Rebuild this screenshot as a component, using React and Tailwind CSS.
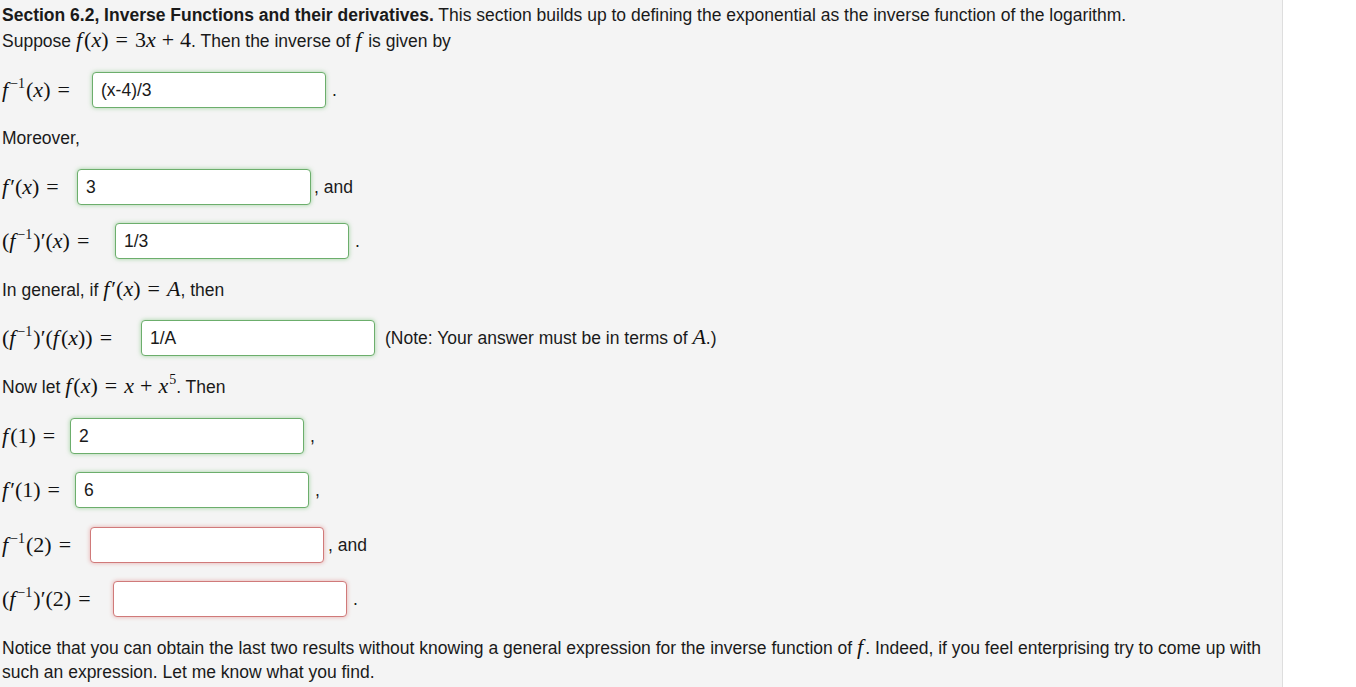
import React from 'react';

// math helpers, MathJax-ish serif look
const M = ({ children }) => (
  <span className="font-['Liberation_Serif',serif] text-[22px] leading-none text-[#111] whitespace-nowrap">{children}</span>
);
const I = ({ children, r = '' }) => <span className={`italic ${r}`}>{children}</span>;
const Eq = () => <span className="mx-[7px]">=</span>;
const Plus = () => <span className="mx-[6px]">+</span>;
const F = () => <I r="mr-[2px]">f</I>;
const Inv = () => (
  <>
    <I>f</I>
    <sup className="text-[14px] ml-[2px] mr-[1px] -top-[9px]">−1</sup>
  </>
);

function Answer({ value = '', ok = true }) {
  return (
    <div
      className={`w-[234px] h-[36px] shrink-0 rounded-[4px] border bg-white flex items-center px-[8px] text-[17.5px] ${
        ok
          ? 'border-[#6cae6c] shadow-[0_0_4px_rgba(92,184,92,0.55)]'
          : 'border-[#d07a7a] shadow-[0_0_4px_rgba(217,83,79,0.45)]'
      }`}
    >
      {value}
    </div>
  );
}

function Row({ label, labelW, value, ok, after, afterGap = 'ml-[4px]', className = '' }) {
  return (
    <div className={`flex items-center h-[36px] ${className}`}>
      <div className={`${labelW} shrink-0 flex items-center whitespace-nowrap`}>{label}</div>
      <Answer value={value} ok={ok} />
      <span className={`${afterGap} whitespace-nowrap`}>{after}</span>
    </div>
  );
}

export default function App() {
  return (
    <div className="w-[1283px] min-h-[687px] bg-[#f4f4f4] border-r border-[#dedede] pl-[2px] pt-[2px] text-[17.5px] text-[#1a1a1a] font-['Liberation_Sans',Arial,sans-serif]">
      <p className="leading-[26px]">
        <b>Section 6.2, Inverse Functions and their derivatives.</b> This section builds up to defining the exponential as the inverse function of the logarithm.
        <br />
        Suppose <M><F />(<I>x</I>)<Eq />3<I>x</I><Plus />4</M>. Then the inverse of <M><I r="mr-[2px]">f</I></M> is given by
      </p>

      <Row
        className="mt-[18px]"
        labelW="w-[90px]"
        label={<M><Inv />(<I>x</I>)<Eq /></M>}
        value="(x-4)/3"
        after="."
        afterGap="ml-[6px]"
      />

      <p className="mt-[17px] leading-[26px]">Moreover,</p>

      <Row
        className="mt-[18px]"
        labelW="w-[75px]"
        label={<M><F />′(<I>x</I>)<Eq /></M>}
        value="3"
        after=", and"
        afterGap="ml-[3px]"
      />
      <Row
        className="mt-[18px]"
        labelW="w-[113px]"
        label={<M>(<Inv />)′(<I>x</I>)<Eq /></M>}
        value="1/3"
        after="."
        afterGap="ml-[6px]"
      />

      <p className="mt-[18px] leading-[26px]">
        In general, if <M><F />′(<I>x</I>)<Eq /><I>A</I></M>, then
      </p>

      <Row
        className="mt-[17px]"
        labelW="w-[139px]"
        label={<M>(<Inv />)′(<F />(<I>x</I>))<Eq /></M>}
        value="1/A"
        after={<>(Note: Your answer must be in terms of <M><I>A</I></M>.)</>}
        afterGap="ml-[10px]"
      />

      <p className="mt-[18px] leading-[26px]">
        Now let <M><F />(<I>x</I>)<Eq /><I>x</I><Plus /><I>x</I><sup className="text-[14px] ml-[1px] -top-[9px]">5</sup></M>. Then
      </p>

      <Row
        className="mt-[18px]"
        labelW="w-[68px]"
        label={<M><F />(1)<Eq /></M>}
        value="2"
        after=","
        afterGap="ml-[6px]"
      />
      <Row
        className="mt-[18px]"
        labelW="w-[73px]"
        label={<M><F />′(1)<Eq /></M>}
        value="6"
        after=","
        afterGap="ml-[6px]"
      />
      <Row
        className="mt-[19px]"
        labelW="w-[88px]"
        label={<M><Inv />(2)<Eq /></M>}
        ok={false}
        after=", and"
        afterGap="ml-[4px]"
      />
      <Row
        className="mt-[18px]"
        labelW="w-[111px]"
        label={<M>(<Inv />)′(2)<Eq /></M>}
        ok={false}
        after="."
        afterGap="ml-[6px]"
      />

      <p className="mt-[19px] leading-[24px] pr-[14px]">
        Notice that you can obtain the last two results without knowing a general expression for the inverse function of <M><I r="mr-[2px]">f</I></M>. Indeed, if you feel enterprising try to come up with such an expression. Let me know what you find.
      </p>
    </div>
  );
}
